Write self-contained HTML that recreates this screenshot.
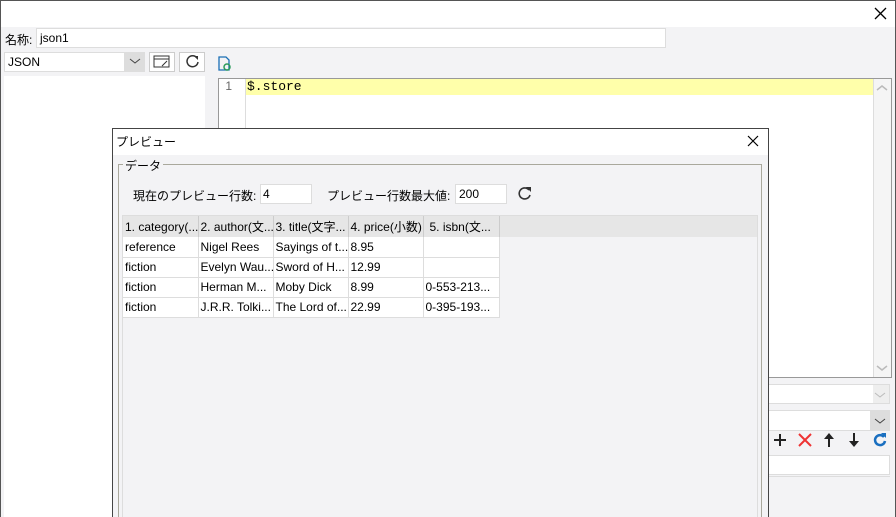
<!DOCTYPE html>
<html><head><meta charset="utf-8"><style>
*{margin:0;padding:0;box-sizing:border-box}
html,body{width:896px;height:517px;overflow:hidden}
body{background:#f3f3f5;font-family:"Liberation Sans","Noto Sans CJK JP",sans-serif;font-size:12px;color:#000;position:relative}
.a{position:absolute}
.w{background:#fff}
td{border-right:1px solid #ddd;border-bottom:1px solid #ddd;height:20px;padding:0 2px;white-space:nowrap;overflow:hidden;font-size:12px}
th{font-weight:normal;text-align:left;height:21px;padding:0 2px;border-right:1px solid #ccc;white-space:nowrap;overflow:hidden;font-size:12px}
</style></head><body>
<div class="a" style="left:0;top:0;width:896px;height:517px;border:1px solid #555;border-bottom:none"></div>
<div class="a w" style="left:1px;top:1px;width:894px;height:26px"></div>
<svg class="a" style="left:874px;top:7px" width="13" height="13"><path d="M1 1L12 12M12 1L1 12" stroke="#000" stroke-width="1.3"/></svg>
<div class="a" style="left:5px;top:31px">名称:</div>
<div class="a w" style="left:36px;top:28px;width:630px;height:20px;border:1px solid #ddd;padding:2px 3px">json1</div>
<div class="a w" style="left:4px;top:52px;width:141px;height:20px;border:1px solid #ddd;padding:2px 3px">JSON</div>
<div class="a" style="left:124px;top:53px;width:21px;height:18px;background:#ddd"></div>
<svg class="a" style="left:129px;top:57px" width="12" height="8"><path d="M1 2L6 6L11 2" stroke="#444" fill="none"/></svg>
<div class="a w" style="left:149px;top:52px;width:26px;height:20px;border:1px solid #ccc"></div>
<svg class="a" style="left:153px;top:55px" width="18" height="14"><rect x="1" y="1" width="15" height="11" fill="none" stroke="#333"/><path d="M1 4H16M9 11L14 6" stroke="#333"/></svg>
<div class="a w" style="left:179px;top:52px;width:26px;height:20px;border:1px solid #ccc"></div>
<svg class="a" style="left:185px;top:54px" width="15" height="15"><path d="M12 4A5.5 5.5 0 1 0 13 8" stroke="#333" stroke-width="1.5" fill="none"/><path d="M9 2L13 2L13 6Z" fill="#333"/></svg>
<svg class="a" style="left:218px;top:56px" width="14" height="16"><path d="M1 1H8L11 4V14H1Z" fill="none" stroke="#1a6fb5" stroke-width="1.3"/><circle cx="9" cy="11" r="3" fill="none" stroke="#2a9a5a" stroke-width="1.5"/></svg>
<div class="a w" style="left:4px;top:76px;width:201px;height:441px"></div>
<div class="a w" style="left:218px;top:78px;width:674px;height:300px;border:1px solid #999"></div>
<div class="a" style="left:219px;top:79px;width:27px;height:298px;background:#fff;border-right:1px solid #ddd;text-align:right;padding-right:13px;color:#666;font-size:12px">1</div>
<div class="a" style="left:246px;top:79px;width:627px;height:16px;background:#ffffaa;font-family:'Liberation Mono',monospace;font-size:13px;padding-left:1px">$.store</div>
<div class="a" style="left:873px;top:79px;width:18px;height:298px;background:#f5f5f5;border-left:1px solid #ddd"></div>
<svg class="a" style="left:876px;top:84px" width="12" height="8"><path d="M1 6L6 2L11 6" stroke="#bbb" stroke-width="1.5" fill="none"/></svg>
<svg class="a" style="left:876px;top:364px" width="12" height="8"><path d="M1 2L6 6L11 2" stroke="#bbb" stroke-width="1.5" fill="none"/></svg>
<div class="a w" style="left:768px;top:384px;width:122px;height:20px;border:1px solid #ddd"></div>
<div class="a" style="left:873px;top:385px;width:16px;height:18px;background:#eee"></div>
<div class="a w" style="left:768px;top:410px;width:122px;height:21px;border:1px solid #ddd"></div>
<div class="a" style="left:870px;top:411px;width:19px;height:19px;background:#ddd"></div>
<svg class="a" style="left:874px;top:417px" width="12" height="8"><path d="M1 2L6 6L11 2" stroke="#444" fill="none"/></svg>
<svg class="a" style="left:874px;top:391px" width="12" height="8"><path d="M1 2L6 6L11 2" stroke="#bbb" fill="none"/></svg>
<svg class="a" style="left:773px;top:433px" width="14" height="14"><path d="M7 1V13M1 7H13" stroke="#222" stroke-width="2"/></svg>
<svg class="a" style="left:798px;top:433px" width="14" height="14"><path d="M1 1L13 13M13 1L1 13" stroke="#e33" stroke-width="2"/></svg>
<svg class="a" style="left:823px;top:432px" width="12" height="16"><path d="M6 15V4" stroke="#222" stroke-width="2"/><path d="M1 7L6 1L11 7Z" fill="#222"/></svg>
<svg class="a" style="left:848px;top:432px" width="12" height="16"><path d="M6 1V12" stroke="#222" stroke-width="2"/><path d="M1 9L6 15L11 9Z" fill="#222"/></svg>
<svg class="a" style="left:872px;top:432px" width="16" height="16"><path d="M12 5A5 5 0 1 0 13 9" stroke="#1a6fc0" stroke-width="2.5" fill="none"/><path d="M9 1L14 1L14 6Z" fill="#1a6fc0"/></svg>
<div class="a w" style="left:768px;top:455px;width:122px;height:20px;border:1px solid #ddd"></div>
<div class="a" style="left:768px;top:476px;width:122px;height:1px;background:#ddd"></div>
<div class="a" style="left:112px;top:128px;width:657px;height:389px;border:1px solid #444;border-bottom:none;background:#f3f3f5;overflow:hidden">
<div class="w" style="height:26px;padding:4px 3px;font-size:12px">プレビュー</div>
<svg class="a" style="left:634px;top:6px" width="12" height="12"><path d="M1 1L11 11M11 1L1 11" stroke="#000" stroke-width="1.2"/></svg>
<div class="a" style="left:5px;top:35px;width:644px;height:354px;border:1px solid #a9a89c;border-bottom:none"></div>
<div class="a" style="left:10px;top:28px;background:#f3f3f5;padding:0 2px">データ</div>
<div class="a" style="left:20px;top:58px">現在のプレビュー行数:</div>
<div class="a w" style="left:147px;top:55px;width:52px;height:20px;border:1px solid #ddd;padding:2px 2px">4</div>
<div class="a" style="left:214px;top:58px">プレビュー行数最大値:</div>
<div class="a w" style="left:342px;top:55px;width:52px;height:20px;border:1px solid #ddd;padding:2px 3px">200</div>
<svg class="a" style="left:404px;top:57px" width="16" height="16"><path d="M12 4A5.5 5.5 0 1 0 13 9" stroke="#333" stroke-width="1.6" fill="none"/><path d="M9 1L14 1L14 6Z" fill="#333"/></svg>
<div class="a" style="left:9px;top:86px;width:636px;height:302px;border:1px solid #ddd;border-bottom:none;overflow:hidden">
<div style="position:absolute;left:0;top:0;width:634px;height:21px;background:#e6e6e6"></div>
<table style="position:relative;border-collapse:collapse;table-layout:fixed;width:376px">
<colgroup><col style="width:75px"><col style="width:75px"><col style="width:75px"><col style="width:75px"><col style="width:76px"></colgroup>
<tr><th>1. category(...</th><th>2. author(文...</th><th>3. title(文字...</th><th>4. price(小数)</th><th style="padding-left:6px">5. isbn(文...</th></tr>
<tr class="w"><td>reference</td><td>Nigel Rees</td><td>Sayings of t...</td><td>8.95</td><td></td></tr>
<tr class="w"><td>fiction</td><td>Evelyn Wau...</td><td>Sword of H...</td><td>12.99</td><td></td></tr>
<tr class="w"><td>fiction</td><td>Herman M...</td><td>Moby Dick</td><td>8.99</td><td>0-553-213...</td></tr>
<tr class="w"><td>fiction</td><td>J.R.R. Tolki...</td><td>The Lord of...</td><td>22.99</td><td>0-395-193...</td></tr>
</table>
</div>
</div>
</body></html>
